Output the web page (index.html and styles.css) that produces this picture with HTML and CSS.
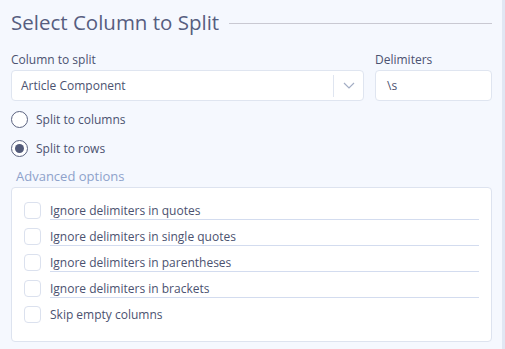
FILE: index.html
```html
<!DOCTYPE html>
<html lang="en">
  <head>
    <meta charset="UTF-8" />
    <title>Select Column to Split</title>
    <link rel="stylesheet" href="styles.css">
  </head>
  <body>
    <div class="panel">
      <div class="heading">
        <h1 class="title">Select Column to Split</h1>
        <div class="rule"></div>
      </div>

      <div class="fields">
        <div class="field field-grow">
          <label class="label">Column to split</label>
          <div class="select">
            <span class="select-value">Article Component</span>
            <span class="select-sep"></span>
            <span class="select-arrow">
              <svg width="12" height="7" viewBox="0 0 12 7">
                <path d="M1 1 L6 6 L11 1" fill="none" stroke="#a3adc4" stroke-width="1.2" />
              </svg>
            </span>
          </div>
        </div>
        <div class="field field-small">
          <label class="label">Delimiters</label>
          <div class="input">\s</div>
        </div>
      </div>

      <div class="radios">
        <div class="radio-row">
          <span class="radio"></span>
          <span class="radio-text">Split to columns</span>
        </div>
        <div class="radio-row">
          <span class="radio checked"></span>
          <span class="radio-text">Split to rows</span>
        </div>
      </div>

      <div class="advanced">
        <div class="legend">Advanced options</div>
        <div class="box">
          <div class="check-row">
            <span class="check"></span>
            <span class="check-text underlined">Ignore delimiters in quotes</span>
          </div>
          <div class="check-row">
            <span class="check"></span>
            <span class="check-text underlined">Ignore delimiters in single quotes</span>
          </div>
          <div class="check-row">
            <span class="check"></span>
            <span class="check-text underlined">Ignore delimiters in parentheses</span>
          </div>
          <div class="check-row">
            <span class="check"></span>
            <span class="check-text underlined">Ignore delimiters in brackets</span>
          </div>
          <div class="check-row">
            <span class="check"></span>
            <span class="check-text">Skip empty columns</span>
          </div>
        </div>
      </div>
    </div>
  </body>
</html>
```

FILE: styles.css
```css
* {
  margin: 0;
  padding: 0;
  box-sizing: border-box;
}

body {
  font-family: "Open Sans", "Noto Sans", sans-serif;
  background-color: #f5f8fe;
  color: #4b5270;
  width: 505px;
  height: 349px;
  overflow: hidden;
}

.panel {
  width: 505px;
  height: 349px;
  border-right: 3px solid #e1e7f3;
  padding: 9px 10px 0 11px;
}

.heading {
  display: flex;
  align-items: center;
  gap: 10px;
}

.title {
  font-size: 20.5px;
  font-weight: 400;
  color: #575e80;
  line-height: 26px;
  white-space: nowrap;
}

.rule {
  flex: 1;
  height: 1px;
  background-color: #c9c9d2;
  margin-top: 2px;
}

.fields {
  display: flex;
  gap: 11px;
  margin-top: 17px;
}

.field-grow {
  flex: 1;
}

.field-small {
  width: 117px;
}

.label {
  display: block;
  font-size: 12px;
  line-height: 16px;
  color: #4b5270;
  margin-bottom: 2px;
}

.select,
.input {
  height: 31px;
  background-color: #fff;
  border: 1px solid #dfe5f0;
  border-radius: 4px;
  font-size: 12px;
  color: #4b5270;
  display: flex;
  align-items: center;
}

.select-value {
  flex: 1;
  padding-left: 9px;
}

.select-sep {
  width: 1px;
  height: 22px;
  background-color: #dfe5f0;
}

.select-arrow {
  width: 29px;
  display: flex;
  justify-content: center;
}

.input {
  padding-left: 11px;
}

.radios {
  display: flex;
  flex-direction: column;
  gap: 11px;
  margin-top: 9px;
}

.radio-row {
  display: flex;
  align-items: center;
  gap: 8px;
  height: 18px;
}

.radio {
  width: 17px;
  height: 17px;
  border: 1.3px solid #5b6380;
  border-radius: 50%;
  background-color: #fff;
  display: flex;
  justify-content: center;
  align-items: center;
}

.radio.checked::after {
  content: "";
  width: 9px;
  height: 9px;
  border-radius: 50%;
  background-color: #525a79;
}

.radio-text {
  font-size: 12px;
  color: #4b5270;
}

.advanced {
  margin-top: 11px;
}

.legend {
  font-size: 13px;
  line-height: 16px;
  color: #8ea2cb;
  padding-left: 5px;
}

.box {
  margin-top: 3px;
  height: 155px;
  background-color: #fff;
  border: 1px solid #dde3ef;
  border-radius: 4px;
  padding: 14px 12px 0 12px;
  display: flex;
  flex-direction: column;
  gap: 9px;
}

.check-row {
  display: flex;
  align-items: center;
  gap: 9px;
  height: 17px;
}

.check {
  flex: none;
  width: 17px;
  height: 17px;
  border: 1px solid #dbe1ee;
  border-radius: 4px;
  background-color: #fff;
}

.check-text {
  flex: 1;
  font-size: 12px;
  line-height: 17px;
  color: #4b5270;
}

.check-text.underlined {
  border-bottom: 1px solid #d3dcef;
}
```
